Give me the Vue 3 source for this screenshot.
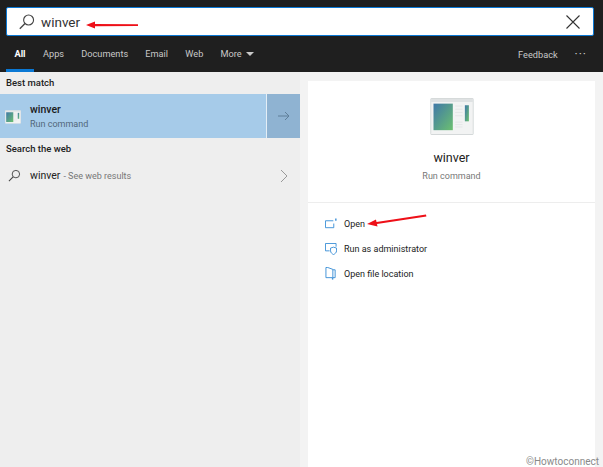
<template>
  <div class="search-window">
    <header class="top">
      <div class="search-box">
        <svg class="search-icon" width="16" height="16" viewBox="0 0 20 20">
          <circle cx="12" cy="7.5" r="6.2" fill="none" stroke="#444" stroke-width="1.4" />
          <path d="M7.5 12L1 18.5" stroke="#444" stroke-width="1.7" />
        </svg>
        <span class="query">winver</span>
        <svg class="arrow-query" width="53" height="8" viewBox="0 0 53 8">
          <path d="M0 4L9 .6V3L52 3.2V5L9 5.2V7.4Z" fill="#ee1018" />
        </svg>
        <svg class="close" width="14" height="14" viewBox="0 0 14 14">
          <path d="M.5 .5L13.5 13.5M13.5 .5L.5 13.5" stroke="#333" stroke-width="1.1" />
        </svg>
      </div>
      <nav class="tabs">
        <span class="tab active">All</span>
        <span class="tab" v-for="tab in tabs" :key="tab">{{ tab }}</span>
        <span class="tab more">More <i class="caret"></i></span>
        <span class="feedback">Feedback</span>
        <span class="dots">···</span>
      </nav>
    </header>

    <main class="content">
      <section class="results">
        <h4>Best match</h4>
        <div class="best">
          <div class="best-main">
            <svg class="app-icon" width="16" height="14" viewBox="0 0 54 46">
              <use href="#winver-icon" />
            </svg>
            <div>
              <div class="best-name">winver</div>
              <div class="best-type">Run command</div>
            </div>
          </div>
          <div class="best-go">
            <svg width="12" height="10" viewBox="0 0 12 10">
              <path d="M0 5H11M7 1L11 5L7 9" fill="none" stroke="#5f7f99" stroke-width="1" />
            </svg>
          </div>
        </div>
        <h4 class="web-title">Search the web</h4>
        <div class="web-row">
          <svg width="13" height="13" viewBox="0 0 14 14">
            <circle cx="8.5" cy="5.5" r="4" fill="none" stroke="#444" stroke-width="1" />
            <path d="M5.5 8.5L1 13" stroke="#444" stroke-width="1.1" />
          </svg>
          <span class="web-query">winver</span>
          <span class="web-hint">- See web results</span>
          <svg class="chev" width="8" height="14" viewBox="0 0 8 14">
            <path d="M1 1L7 7L1 13" fill="none" stroke="#999" stroke-width="1" />
          </svg>
        </div>
      </section>

      <section class="detail">
        <div class="detail-head">
          <svg class="big-icon" width="44" height="37" viewBox="0 0 54 46">
            <defs>
              <linearGradient id="win-grad" x1="0" y1="0" x2="1" y2="1">
                <stop offset="0" stop-color="#3f78a8" />
                <stop offset="1" stop-color="#6cc070" />
              </linearGradient>
              <symbol id="winver-icon" viewBox="0 0 54 46">
                <rect x=".5" y=".5" width="53" height="45" rx="1" fill="#f2f3f3" stroke="#c6cacc" />
                <rect x="1" y="1" width="52" height="4" fill="#dfe2e3" />
                <rect x="4" y="7" width="24" height="33" fill="url(#win-grad)" />
                <rect x="43" y="9" width="5" height="20" fill="url(#win-grad)" />
                <path d="M31 10H40M31 14H40M31 18H40M31 22H40M31 30H40M31 33H40M31 36H40" stroke="#e2e4e5" />
              </symbol>
            </defs>
            <use href="#winver-icon" />
          </svg>
          <div class="detail-name">winver</div>
          <div class="detail-type">Run command</div>
        </div>
        <ul class="actions">
          <li>
            <svg width="12" height="12" viewBox="0 0 13 13">
              <path d="M9 3H.5V10.5H9.5V6" fill="none" stroke="#3a8ed6" />
              <path d="M11 0.5V3H12.5V.5Z" fill="#3a8ed6" />
            </svg>
            <span>Open</span>
            <svg class="arrow-open" width="60" height="13" viewBox="0 0 60 13">
              <path d="M0 10L9 5.5L9.5 8L59 .5L59.4 2.4L10 10L10.5 12.5Z" fill="#ee1018" />
            </svg>
          </li>
          <li>
            <svg width="12" height="12" viewBox="0 0 13 13">
              <path d="M5 8.5H.5V.5H12V4" fill="none" stroke="#3a8ed6" />
              <path d="M6 5.5L9.2 4.5L12.5 5.5V8.5C12.5 10.5 10.5 12 9.2 12.5C8 12 6 10.5 6 8.5Z" fill="none" stroke="#3a8ed6" />
            </svg>
            <span>Run as administrator</span>
          </li>
          <li>
            <svg width="12" height="13" viewBox="0 0 13 14">
              <path d="M3 .5H1V11.5H8V13.5M3 .5L8.5 2.5V13.5M8.5 3H11V11.5H8.5" fill="none" stroke="#3a8ed6" />
            </svg>
            <span>Open file location</span>
          </li>
        </ul>
        <div class="credit">©Howtoconnect</div>
      </section>
    </main>
  </div>
</template>

<script setup>
const tabs = ['Apps', 'Documents', 'Email', 'Web']
</script>

<style>
html,
body {
  margin: 0;
  background: #f3f3f3;
}
</style>

<style scoped>
.search-window {
  width: 603px;
  height: 467px;
  display: flex;
  flex-direction: column;
  overflow: hidden;
  background: #f3f3f3;
  font-family: Roboto, "Open Sans", sans-serif;
}

.top {
  height: 72px;
  padding: 7px 9px 0 6px;
  box-sizing: border-box;
  background: #1f1f1f;
}

.search-box {
  height: 29px;
  box-sizing: border-box;
  display: flex;
  align-items: center;
  padding: 0 13px 0 12px;
  background: #fff;
  border: 1.5px solid #0a78d4;
  border-radius: 2px;
}

.query {
  margin-left: 6px;
  font-size: 13.5px;
  color: #333;
}

.arrow-query {
  margin: 6px 0 0 6px;
}

.close {
  margin-left: auto;
}

.tabs {
  height: 36px;
  display: flex;
  align-items: center;
  font-size: 9.2px;
  color: #c8c8c8;
}

.tab {
  height: 33px;
  margin-top: 3px;
  line-height: 30px;
  box-sizing: border-box;
  padding: 0 8.6px;
}

.tab.active {
  width: 28px;
  padding: 0;
  margin-right: 0.4px;
  text-align: center;
  font-weight: 700;
  color: #fff;
  border-bottom: 3px solid #0a78d4;
}

.caret {
  display: inline-block;
  width: 0;
  height: 0;
  margin-left: 2px;
  vertical-align: 1px;
  border-left: 4px solid transparent;
  border-right: 4px solid transparent;
  border-top: 4px solid #c8c8c8;
}

.feedback {
  margin-left: auto;
  margin-top: 0;
}

.dots {
  margin: 0 7px 0 17px;
  font-size: 12px;
  letter-spacing: 1px;
}

.content {
  flex: 1;
  display: flex;
  min-height: 0;
}

.results {
  width: 300px;
  flex-shrink: 0;
  background: #eeeeee;
}

h4 {
  margin: 0;
  padding: 5px 0 0 6px;
  height: 22px;
  box-sizing: border-box;
  font-size: 9.5px;
  font-weight: 500;
  color: #222;
}

.best {
  height: 44px;
  display: flex;
  background: #a6cbe9;
}

.best-main {
  flex: 1;
  display: flex;
  align-items: center;
  padding: 1px 0 0 5px;
  gap: 9px;
}

.best-name {
  font-size: 10.5px;
  font-weight: 500;
  color: #1a1a1a;
  line-height: 14px;
}

.best-type {
  font-size: 9px;
  color: #51677a;
  line-height: 14px;
}

.best-go {
  width: 33px;
  display: flex;
  align-items: center;
  justify-content: center;
  background: #8fb3d2;
  border-left: 1px solid #e4eef6;
}

.web-title {
  padding-top: 5px;
  height: 23px;
}

.web-row {
  height: 29px;
  display: flex;
  align-items: center;
  padding: 0 12px 0 8px;
  font-size: 9px;
}

.web-query {
  margin-left: 9px;
  font-size: 10.5px;
  color: #222;
}

.web-hint {
  margin-left: 3px;
  color: #777;
}

.chev {
  margin-left: auto;
}

.detail {
  position: relative;
  width: 287px;
  margin: 9px 0 0 8px;
  background: #fff;
}

.detail-head {
  height: 122px;
  display: flex;
  flex-direction: column;
  align-items: center;
  box-sizing: border-box;
  padding-top: 17px;
  border-bottom: 1px solid #ededed;
}

.big-icon {
  margin-bottom: 15px;
}

.detail-name {
  font-size: 12.5px;
  line-height: 16px;
  color: #222;
}

.detail-type {
  margin-top: 5px;
  font-size: 9px;
  color: #777;
}

.actions {
  margin: 8px 0 0;
  padding: 0 0 0 17px;
  list-style: none;
}

.actions li {
  height: 25px;
  display: flex;
  align-items: center;
  gap: 7px;
  font-size: 9px;
  color: #222;
}

.arrow-open {
  margin: -6px 0 0 -5px;
}

.credit {
  position: absolute;
  right: -4px;
  bottom: 0;
  font-size: 10px;
  color: #8a8a8a;
}
</style>
